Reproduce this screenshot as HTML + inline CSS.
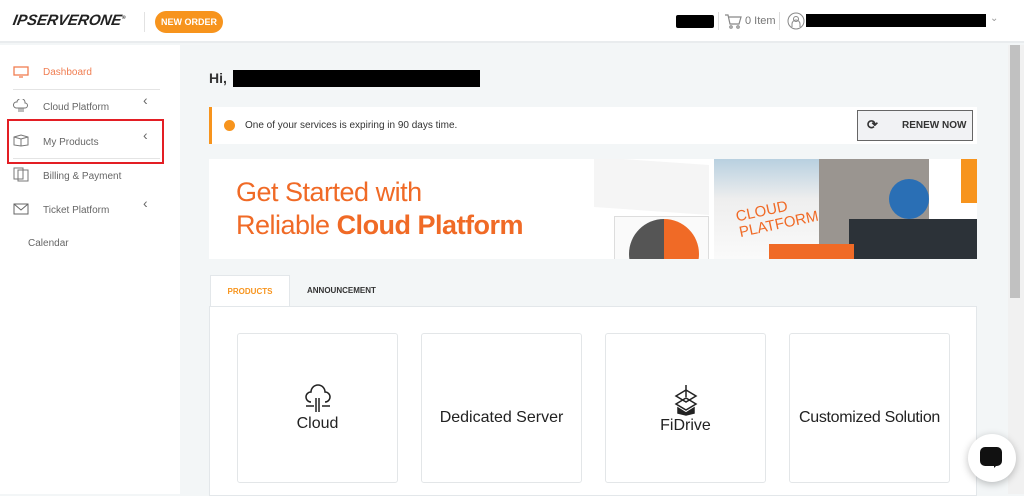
<!DOCTYPE html><html><head><style>
*{box-sizing:border-box;margin:0;padding:0}
body{width:1024px;height:494px;overflow:hidden;font-family:"Liberation Sans",sans-serif;background:#f3f6f7;position:relative;color:#333}
.a{position:absolute}
.chev{font-size:14px;color:#666;left:143px}
</style></head><body>
<div class="a" style="left:0;top:0;width:1024px;height:43px;background:#fff;border-bottom:2px solid #e9ecee"></div>
<div class="a" style="left:13px;top:12px;font:italic 900 15px 'Liberation Sans';color:#222;transform:skewX(-10deg)">IPSERVERONE<sup style="font-size:5px">®</sup></div>
<div class="a" style="left:144px;top:12px;width:1px;height:20px;background:#e2e2e2"></div>
<div class="a" style="left:155px;top:11px;width:68px;height:22px;border-radius:11px;background:#f7941d;color:#fff;font:bold 9px 'Liberation Sans';text-align:center;line-height:22px">NEW ORDER</div>
<div class="a" style="left:676px;top:15px;width:38px;height:13px;background:#000;border-radius:2px"></div>
<div class="a" style="left:718px;top:12px;width:1px;height:18px;background:#ddd"></div>
<svg class="a" style="left:724px;top:13px" width="18" height="16" viewBox="0 0 18 16" fill="none" stroke="#888" stroke-width="1.2"><path d="M1 2h3l2 9h9l2-7H5"/><circle cx="7" cy="14" r="1.2"/><circle cx="14" cy="14" r="1.2"/></svg>
<div class="a" style="left:745px;top:15px;font-size:11px;color:#777">0 Item</div>
<div class="a" style="left:779px;top:12px;width:1px;height:18px;background:#ddd"></div>
<svg class="a" style="left:787px;top:12px" width="18" height="18" viewBox="0 0 18 18" fill="none" stroke="#888"><circle cx="9" cy="9" r="8"/><circle cx="9" cy="7" r="2.5"/><path d="M5 15v-3a4 4 0 0 1 8 0v3"/></svg>
<div class="a" style="left:806px;top:14px;width:180px;height:13px;background:#000"></div>
<div class="a" style="left:990px;top:13px;font-size:10px;color:#999">⌄</div>
<div class="a" style="left:0;top:45px;width:180px;height:449px;background:#fff"></div>
<svg class="a" style="left:13px;top:66px" width="16" height="12" viewBox="0 0 16 12" fill="none" stroke="#f07e52" stroke-width="1.3"><rect x="1" y="1" width="14" height="8"/><path d="M6 11h4"/></svg>
<div class="a" style="left:43px;top:67px;font-size:10px;color:#f07e52">Dashboard</div>
<div class="a" style="left:13px;top:89px;width:147px;height:1px;background:#e4e4e4"></div>
<svg class="a" style="left:12px;top:99px" width="18" height="14" viewBox="0 0 18 14" fill="none" stroke="#777"><path d="M4 9a3 3 0 0 1 1-6 4 4 0 0 1 8 1 2.5 2.5 0 0 1 0 5zM7 9v4M9 9v4M11 9v4"/></svg>
<div class="a" style="left:43px;top:102px;font-size:10px;color:#666">Cloud Platform</div>
<div class="a chev" style="top:92px">‹</div>
<div class="a" style="left:7px;top:119px;width:157px;height:45px;border:2px solid #e31e24"></div>
<svg class="a" style="left:13px;top:134px" width="16" height="13" viewBox="0 0 16 13" fill="none" stroke="#777"><path d="M1 3l7-2 7 2v8l-7 1-7-1zM1 3l7 2 7-2M8 5v7"/></svg>
<div class="a" style="left:43px;top:137px;font-size:10px;color:#666">My Products</div>
<div class="a chev" style="top:127px">‹</div>
<div class="a" style="left:13px;top:158px;width:147px;height:1px;background:#e4e4e4"></div>
<svg class="a" style="left:13px;top:167px" width="16" height="15" viewBox="0 0 16 15" fill="none" stroke="#777"><rect x="1" y="1" width="9" height="11"/><rect x="5" y="3" width="10" height="11"/></svg>
<div class="a" style="left:43px;top:171px;font-size:10px;color:#666">Billing &amp; Payment</div>
<svg class="a" style="left:13px;top:203px" width="16" height="12" viewBox="0 0 16 12" fill="none" stroke="#666"><rect x="1" y="1" width="14" height="10"/><path d="M1 1l7 6 7-6"/></svg>
<div class="a" style="left:43px;top:205px;font-size:10px;color:#666">Ticket Platform</div>
<div class="a chev" style="top:195px">‹</div>
<div class="a" style="left:28px;top:238px;font-size:10px;color:#666">Calendar</div>
<div class="a" style="left:209px;top:70px;font:bold 14px 'Liberation Sans';color:#333">Hi,</div>
<div class="a" style="left:233px;top:70px;width:247px;height:17px;background:#000"></div>
<div class="a" style="left:209px;top:107px;width:768px;height:37px;background:#fff;border-left:3px solid #f7941d"></div>
<div class="a" style="left:224px;top:120px;width:11px;height:11px;border-radius:50%;background:#f7941d"></div>
<div class="a" style="left:245px;top:120px;font-size:10px;color:#333">One of your services is expiring in 90 days time.</div>
<div class="a" style="left:857px;top:110px;width:116px;height:31px;background:#f1f2f4;border:1px solid #666"></div>
<div class="a" style="left:867px;top:117px;font:bold 13px 'Liberation Sans';color:#333">⟳</div>
<div class="a" style="left:902px;top:120px;font:bold 10px 'Liberation Sans';color:#333">RENEW NOW</div>
<div class="a" style="left:209px;top:159px;width:768px;height:100px;background:#fff;overflow:hidden">
 <div class="a" style="left:27px;top:17px;font-size:27px;font-weight:300;color:#f06a26;line-height:33px;letter-spacing:-0.5px">Get Started with<br>Reliable <span style="font-weight:700">Cloud Platform</span></div>
 <div class="a" style="left:385px;top:2px;width:115px;height:50px;background:#f5f5f5;transform:skewY(4deg)"></div>
 <div class="a" style="left:405px;top:57px;width:95px;height:60px;background:#fafafa;border:1px solid #ddd"></div>
 <div class="a" style="left:420px;top:60px;width:70px;height:70px;border-radius:50%;background:linear-gradient(90deg,#555 50%,#f06a26 50%)"></div>
 <div class="a" style="left:505px;top:0;width:165px;height:100px;background:linear-gradient(#b8d0e0,#eee 40%,#fafafa)"></div>
 <div class="a" style="left:528px;top:42px;font-size:15px;color:#f06a26;transform:rotate(-12deg);line-height:16px">CLOUD<br>PLATFORM</div>
 <div class="a" style="left:610px;top:0;width:110px;height:85px;background:#9a9590"></div>
 <div class="a" style="left:680px;top:20px;width:40px;height:40px;border-radius:50%;background:#2a6fb5"></div>
 <div class="a" style="left:640px;top:60px;width:128px;height:40px;background:#2c3238"></div>
 <div class="a" style="left:752px;top:0;width:16px;height:44px;background:#f7941d"></div>
 <div class="a" style="left:560px;top:85px;width:85px;height:15px;background:#f06a26"></div>
</div>
<div class="a" style="left:210px;top:275px;width:80px;height:32px;background:#fff;border:1px solid #e3e7ea;border-bottom:none;font:bold 8px 'Liberation Sans';color:#f7941d;text-align:center;line-height:32px">PRODUCTS</div>
<div class="a" style="left:307px;top:286px;font:bold 8px 'Liberation Sans';color:#333">ANNOUNCEMENT</div>
<div class="a" style="left:209px;top:306px;width:768px;height:190px;background:#fff;border:1px solid #e3e7ea"></div>
<div class="a" style="left:237px;top:333px;width:161px;height:150px;border:1px solid #e3e6e8;border-radius:3px;text-align:center">
 <svg style="margin-top:50px" width="32" height="30" viewBox="0 0 32 30" fill="none" stroke="#222" stroke-width="1.5"><path d="M9 18a5 5 0 0 1 0-10 7 7 0 0 1 14 0 5 5 0 0 1 0 10M14 14v14M17 14v14M4 22h8M20 22h8"/></svg>
 <div style="font-size:16px;color:#222;margin-top:-4px">Cloud</div></div>
<div class="a" style="left:421px;top:333px;width:161px;height:150px;border:1px solid #e3e6e8;border-radius:3px;text-align:center;padding-top:75px;font-size:16px;color:#222;white-space:nowrap">Dedicated Server</div>
<div class="a" style="left:605px;top:333px;width:161px;height:150px;border:1px solid #e3e6e8;border-radius:3px;text-align:center">
 <svg style="margin-top:50px" width="28" height="32" viewBox="0 0 28 32" fill="none" stroke="#222" stroke-width="1.5"><path d="M14 1v12M4 12l10-6 10 6-10 6zM4 20l10-6 10 6-10 6z"/><path d="M6 24l8 5 8-5v5l-8 2-8-2z" fill="#222"/></svg>
 <div style="font-size:16px;color:#222;margin-top:-4px">FiDrive</div></div>
<div class="a" style="left:789px;top:333px;width:161px;height:150px;border:1px solid #e3e6e8;border-radius:3px;text-align:center;padding-top:75px;font-size:16px;color:#222;white-space:nowrap;letter-spacing:-0.3px">Customized Solution</div>
<div class="a" style="left:1008px;top:45px;width:16px;height:449px;background:#f1f1f1"></div>
<div class="a" style="left:1010px;top:45px;width:10px;height:253px;background:#c1c1c1"></div>
<div class="a" style="left:968px;top:434px;width:48px;height:48px;border-radius:50%;background:#fff;box-shadow:0 2px 8px rgba(0,0,0,.25)"></div>
<div class="a" style="left:980px;top:447px;width:22px;height:19px;border-radius:5px;background:#111"></div>
<div class="a" style="left:994px;top:463px;width:0;height:0;border-left:5px solid #111;border-bottom:5px solid transparent"></div>
</body></html>
